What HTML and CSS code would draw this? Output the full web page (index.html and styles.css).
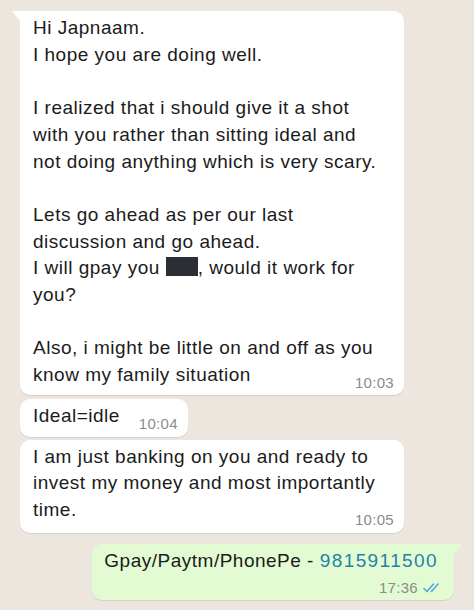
FILE: index.html
```html
<!DOCTYPE html>
<html lang="en">

<head>
  <meta charset="UTF-8" />
  <meta name="viewport" content="width=device-width, initial-scale=1.0" />
  <title>Chat</title>
  <link rel="stylesheet" href="styles.css">
</head>

<body>
  <div class="chat">
    <div class="msg in tail full">
      <p class="text">Hi Japnaam.<br>I hope you are doing well.<br><br>I realized that i should give it a shot<br>with you rather than sitting ideal and<br>not doing anything which is very scary.<br><br>Lets go ahead as per our last<br>discussion and go ahead.<br>I will gpay you <span class="redact"></span>, would it work for<br>you?<br><br>Also, i might be little on and off as you<br>know my family situation<span class="spacer"></span></p>
      <span class="time">10:03</span>
    </div>

    <div class="msg in short">
      <p class="text">Ideal=idle<span class="spacer"></span></p>
      <span class="time">10:04</span>
    </div>

    <div class="msg in full last">
      <p class="text">I am just banking on you and ready to<br>invest my money and most importantly<br>time.<span class="spacer"></span></p>
      <span class="time">10:05</span>
    </div>

    <div class="msg out tail">
      <p class="text">Gpay/Paytm/PhonePe - <a href="#" class="phone">9815911500</a></p>
      <div class="meta">
        <span class="stamp">17:36</span>
        <svg class="ticks" width="20" height="10" viewBox="0 0 20 10">
          <path d="M1 5.5 L4 8.5 L10.5 1" fill="none" stroke="#4fa9dd" stroke-width="1.6" stroke-linecap="round" stroke-linejoin="round" />
          <path d="M8.5 8.5 L15 1" fill="none" stroke="#4fa9dd" stroke-width="1.6" stroke-linecap="round" />
        </svg>
      </div>
    </div>
  </div>
</body>

</html>
```

FILE: styles.css
```css
* {
  box-sizing: border-box;
}

body {
  margin: 0;
  width: 474px;
  height: 610px;
  overflow: hidden;
  font-family: "Liberation Sans", Arial, sans-serif;
  background-color: #ece6df;
  color: #1b1b1b;
}

.chat {
  display: flex;
  flex-direction: column;
  padding-top: 11px;
}

.msg {
  position: relative;
  background: #fff;
  border-radius: 10px;
  box-shadow: 0 1px 1px rgba(0, 0, 0, 0.1);
}

.msg .text {
  margin: 0;
  font-size: 19px;
  line-height: 26.7px;
  letter-spacing: 0.5px;
}

.in {
  align-self: flex-start;
  margin-left: 20px;
  padding: 4px 13px 7px 13px;
}

.in.full {
  width: 384px;
}

.in.tail {
  border-top-left-radius: 0;
  padding-bottom: 6px;
}

.in.tail::before {
  content: "";
  position: absolute;
  top: 0;
  left: -8px;
  border-top: 10px solid #fff;
  border-left: 8px solid transparent;
}

.short {
  margin-top: 4px;
}

.last {
  margin-top: 3px;
  padding-bottom: 9px;
}

.out {
  align-self: flex-end;
  margin-top: 11px;
  margin-right: 20px;
  padding: 4px 16px 5px 12px;
  background: #e3fbd3;
  border-top-right-radius: 0;
}

.out::after {
  content: "";
  position: absolute;
  top: 0;
  right: -8px;
  border-top: 10px solid #e3fbd3;
  border-right: 8px solid transparent;
}

.spacer {
  display: inline-block;
  width: 55px;
}

.time {
  position: absolute;
  right: 10px;
  bottom: 5px;
  font-size: 15px;
  line-height: 15px;
  letter-spacing: 0.3px;
  color: #8b8b8b;
}

.short .time,
.last .time {
  bottom: 6px;
}

.phone {
  color: #1f83a6;
  text-decoration: none;
  letter-spacing: 1.4px;
}

.meta {
  display: flex;
  justify-content: flex-end;
  align-items: center;
  gap: 5px;
  margin-top: 6px;
  margin-right: -5px;
  font-size: 15px;
  line-height: 15px;
  letter-spacing: 0.3px;
  color: #8b8b8b;
}

.ticks {
  display: block;
}

.redact {
  display: inline-block;
  width: 32px;
  height: 19px;
  vertical-align: -2px;
  background: #2b2e33;
}
```
